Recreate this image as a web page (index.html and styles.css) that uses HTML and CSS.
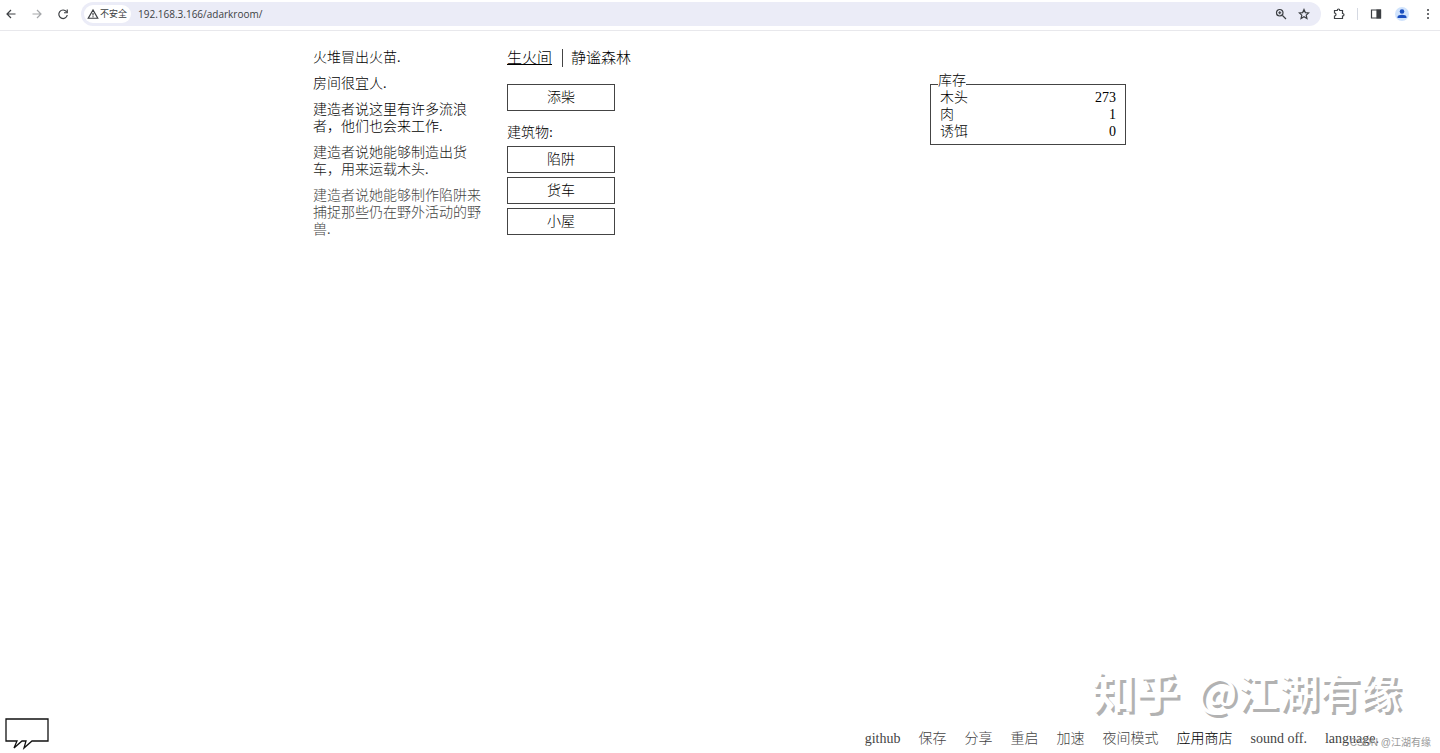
FILE: index.html
```html
<!DOCTYPE html>
<html lang="zh-CN">
<head>
<meta charset="utf-8">
<title>小黑屋</title>
<link rel="stylesheet" href="styles.css">
</head>
<body>
<header class="toolbar">
  <button class="icon-btn" aria-label="后退"><svg class="icon" viewBox="0 0 24 24"><path d="M21 12H4M12 4l-8 8 8 8"/></svg></button>
  <button class="icon-btn muted" aria-label="前进"><svg class="icon" viewBox="0 0 24 24"><path d="M3 12h17M12 4l8 8-8 8"/></svg></button>
  <button class="icon-btn" aria-label="重新加载"><svg class="icon" viewBox="0 0 24 24"><path d="M19 7.500A8.500 8.500 0 1 0 20.500 14M20.500 3v6.500H14"/></svg></button>
  <div class="omnibox">
    <button class="security"><svg class="icon" viewBox="0 0 24 24"><path d="M12 4L2.500 20.500h19zM12 10v5M12 16.500v2"/></svg>不安全</button>
    <input class="url" type="text" aria-label="地址" value="192.168.3.166/adarkroom/">
    <button class="icon-btn" aria-label="缩放"><svg class="icon" viewBox="0 0 24 24"><path d="M15 15l7 7M6.500 9.500h6M9.500 6.500v6"/><circle cx="9.500" cy="9.500" r="6.500"/></svg></button>
    <button class="icon-btn" aria-label="收藏"><svg class="icon" viewBox="0 0 24 24"><path d="M12 3l2.700 6.200 6.800.6-5.100 4.500 1.500 6.700-5.900-3.500L6.100 21l1.500-6.700-5.100-4.500 6.800-.6z"/></svg></button>
  </div>
  <button class="icon-btn" aria-label="扩展程序"><svg class="icon" viewBox="0 0 24 24"><path d="M3 5h5.500c0-4 5-4 5 0H19v6c4 0 4 5 0 5v5H3v-5c4 0 4-6 0-6z"/></svg></button>
  <span class="divider"></span>
  <button class="icon-btn" aria-label="侧边栏"><svg class="icon" viewBox="0 0 24 24"><path d="M3 4h18v16H3z"/><path class="solid" d="M14 4h7v16h-7z"/></svg></button>
  <button class="icon-btn" aria-label="个人资料"><svg class="avatar" viewBox="0 0 16 16"><circle class="avatar-bg" cx="8" cy="8" r="7"/><circle class="avatar-fg" cx="8" cy="5.500" r="2.300"/><path class="avatar-fg" d="M3.500 12v-1c0-3 9-3 9 0v1z"/></svg></button>
  <button class="icon-btn" aria-label="菜单"><svg class="icon" viewBox="0 0 24 24"><path class="dots" d="M12 4h.01M12 12h.01M12 20h.01"/></svg></button>
</header>

<main class="game">
  <section class="messages" aria-label="消息">
    <p>火堆冒出火苗.</p>
    <p>房间很宜人.</p>
    <p>建造者说这里有许多流浪者，他们也会来工作.</p>
    <p class="older">建造者说她能够制造出货车，用来运载木头.</p>
    <p class="oldest">建造者说她能够制作陷阱来捕捉那些仍在野外活动的野兽.</p>
  </section>
  <section class="room">
    <nav class="tabs">
      <a class="tab selected" href="#room">生火间</a>
      <a class="tab" href="#forest">静谧森林</a>
    </nav>
    <button class="action">添柴</button>
    <h2 class="caption">建筑物:</h2>
    <div class="buildings">
      <button class="action">陷阱</button>
      <button class="action">货车</button>
      <button class="action">小屋</button>
    </div>
  </section>
  <section class="stores" aria-labelledby="stores-title">
    <h2 class="stores-title" id="stores-title">库存</h2>
    <dl>
      <div class="row"><dt>木头</dt><dd>273</dd></div>
      <div class="row"><dt>肉</dt><dd>1</dd></div>
      <div class="row"><dt>诱饵</dt><dd>0</dd></div>
    </dl>
  </section>
</main>

<footer class="footer">
  <button class="bubble" aria-label="评论"><svg viewBox="0 0 46 34"><path d="M2 2h42v22H28l-8 7 2-7h-4l-8 7 3-7H2z"/></svg></button>
  <nav class="menu">
    <a href="#github">github</a>
    <a href="#save">保存</a>
    <a href="#share">分享</a>
    <a href="#restart">重启</a>
    <a href="#hyper">加速</a>
    <a href="#dark">夜间模式</a>
    <a class="strong" href="#store">应用商店</a>
    <a href="#sound">sound off.</a>
    <a href="#language">language.</a>
  </nav>
</footer>
<div class="watermark"><span class="brand">知乎</span><span>@江湖有缘</span></div>
<div class="credit">CSDN @江湖有缘</div>
</body>
</html>
```

FILE: styles.css
```css
* { box-sizing: border-box; }

body {
  margin: 0;
  min-height: 100vh;
  display: flex;
  flex-direction: column;
  position: relative;
  background: #fff;
  color: #000;
  font: 300 14px/17px "Liberation Serif", "Noto Sans CJK SC", serif;
}

button, input { font: inherit; color: inherit; }
a { color: inherit; text-decoration: none; }

.toolbar {
  display: flex;
  align-items: center;
  height: 31px;
  padding: 0 4px 2px 3px;
  gap: 10px;
  border-bottom: 1px solid #e8e8ec;
  color: #3c3f43;
  font: 400 10px/14px "Open Sans", "Noto Sans CJK SC", sans-serif;
}

.icon-btn {
  display: flex;
  align-items: center;
  justify-content: center;
  width: 16px;
  height: 16px;
  padding: 0;
  border: 0;
  background: none;
}

.icon {
  width: 12px;
  height: 12px;
  fill: none;
  stroke: currentColor;
  stroke-width: 2.4;
}

.muted { color: #a5a7aa; }
.solid { fill: currentColor; }
.dots { stroke-width: 4; stroke-linecap: round; }
.avatar { width: 16px; height: 16px; }
.avatar-bg { fill: #d0e3fc; }
.avatar-fg { fill: #1a4fc0; }
.divider { width: 1px; height: 12px; background: #d5d9e2; }

.omnibox {
  flex: 1;
  display: flex;
  align-items: center;
  gap: 7px;
  height: 24px;
  padding: 0 9px 0 3px;
  border-radius: 12px;
  background: #ebecf7;
}

.security {
  display: flex;
  align-items: center;
  gap: 1px;
  height: 18px;
  padding: 0 4px 0 3px;
  border: 0;
  border-radius: 9px;
  background: #fff;
  font-size: 9px;
  white-space: nowrap;
}

.url {
  flex: 1;
  min-width: 0;
  padding: 0;
  border: 0;
  background: none;
  font-size: 10px;
}

.game {
  flex: 1;
  display: flex;
  align-items: flex-start;
  width: 100%;
  max-width: 814px;
  margin: 0 auto;
  padding: 18px 1px 0 0;
}

.messages { width: 172px; margin-right: 22px; }
.messages p { margin: 0 0 9px; }
.older { color: #222; }
.oldest { color: #444; }

.room { display: flex; flex-direction: column; align-items: flex-start; }

.tabs {
  display: flex;
  margin-bottom: 17px;
  font-size: 15px;
  line-height: 18px;
}

.tab + .tab { margin-left: 10px; padding-left: 8px; border-left: 1px solid #444; }
.selected { text-decoration: underline; }

.action {
  width: 108px;
  height: 27px;
  padding: 0;
  border: 1px solid #444;
  background: #fff;
}

.caption { margin: 13px 0 5px; font: inherit; }
.buildings { display: flex; flex-direction: column; gap: 4px; }

.stores {
  width: 196px;
  margin: 35px 0 0 auto;
  padding: 0 9px 4px;
  border: 1px solid #444;
}

.stores-title {
  width: max-content;
  margin: -13px 0 0 -2px;
  background: #fff;
  font: inherit;
}

.stores dl, .stores dd { margin: 0; }
.row { display: flex; justify-content: space-between; }

.footer {
  display: flex;
  align-items: flex-end;
  justify-content: space-between;
  padding: 0 61px 2px 4px;
}

.bubble { width: 46px; height: 34px; padding: 0; border: 0; background: none; }
.bubble svg { display: block; width: 46px; height: 34px; fill: #fff; stroke: #111; stroke-width: 1.3; }

.menu { display: flex; gap: 18px; padding-bottom: 4px; color: #444; }
.strong { color: #000; }

.watermark {
  position: absolute;
  right: 39px;
  bottom: 36px;
  display: flex;
  align-items: center;
  gap: 18px;
  color: #fff;
  font: 500 41px/54px "Noto Sans CJK SC", sans-serif;
  text-shadow: 3px 3px 0 #b2b2b2;
  pointer-events: none;
}

.brand { font-size: 44px; font-weight: 700; }

.credit {
  position: absolute;
  right: 9px;
  bottom: 3px;
  color: #999;
  font: 400 10px/14px "Liberation Sans", "Noto Sans CJK SC", sans-serif;
  pointer-events: none;
}
```
